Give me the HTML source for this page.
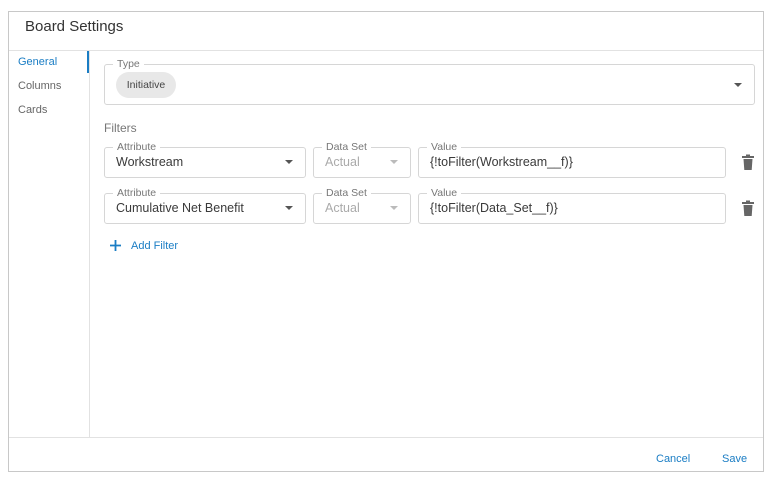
<!DOCTYPE html><html><head><style>
*{box-sizing:border-box;margin:0;padding:0}
body{width:768px;height:479px;background:#fff;font-family:"Liberation Sans",sans-serif;position:relative;overflow:hidden}
.dlg{position:absolute;left:8px;top:11px;width:756px;height:461px;border:1px solid #c8c8c8}
.a{position:absolute}
.box{position:absolute;border:1px solid #d6d6d6;border-radius:3px}
.lbl{position:absolute;top:-7px;left:8px;background:#fff;padding:0 4px;font-size:10.5px;color:#777;line-height:12px}
.val{position:absolute;left:11px;top:7px;font-size:12.5px;color:#3a3a3a}
.dis{color:#aaa}
.car{position:absolute;top:12px;width:0;height:0;border-left:4px solid transparent;border-right:4px solid transparent;border-top:4px solid #555}
.nav{position:absolute;left:18px;font-size:11px;color:#666}
</style></head><body>
<div class="dlg"></div>
<div class="a" style="left:25px;top:18px;font-size:15px;color:#333;line-height:18px">Board Settings</div>
<div class="a" style="left:9px;top:50px;width:754px;height:1px;background:#e2e2e2"></div>
<div class="a" style="left:89px;top:51px;width:1px;height:386px;background:#e2e2e2"></div>
<div class="a" style="left:87px;top:51px;width:2px;height:22px;background:#1a7dc4"></div>
<div class="nav" style="top:56px;color:#1a7dc4">General</div>
<div class="nav" style="top:80px">Columns</div>
<div class="nav" style="top:104px">Cards</div>
<div class="box" style="left:104px;top:64px;width:651px;height:41px"><div class="lbl">Type</div>
<div class="a" style="left:11px;top:7px;width:60px;height:26px;border-radius:13px;background:#e8e8e8;font-size:10.5px;color:#444;line-height:26px;text-align:center">Initiative</div>
<div class="car" style="right:12px;top:18px"></div></div>
<div class="a" style="left:104px;top:121px;font-size:12px;color:#777">Filters</div>

<div class="box" style="left:104px;top:147px;width:202px;height:31px"><div class="lbl">Attribute</div><div class="val">Workstream</div><div class="car" style="right:12px"></div></div>
<div class="box" style="left:313px;top:147px;width:98px;height:31px"><div class="lbl">Data Set</div><div class="val dis">Actual</div><div class="car" style="right:12px;border-top-color:#bbb"></div></div>
<div class="box" style="left:418px;top:147px;width:308px;height:31px"><div class="lbl">Value</div><div class="val">{!toFilter(Workstream__f)}</div></div>

<div class="box" style="left:104px;top:193px;width:202px;height:31px"><div class="lbl">Attribute</div><div class="val">Cumulative Net Benefit</div><div class="car" style="right:12px"></div></div>
<div class="box" style="left:313px;top:193px;width:98px;height:31px"><div class="lbl">Data Set</div><div class="val dis">Actual</div><div class="car" style="right:12px;border-top-color:#bbb"></div></div>
<div class="box" style="left:418px;top:193px;width:308px;height:31px"><div class="lbl">Value</div><div class="val">{!toFilter(Data_Set__f)}</div></div>

<svg class="a" style="left:741px;top:154px" width="14" height="16" viewBox="0 0 14 16"><path d="M1 2h12v2H1zM5 0.5h4v2H5zM2.5 5h9l-0.8 11h-7.4z" fill="#666"/></svg>
<svg class="a" style="left:741px;top:200px" width="14" height="16" viewBox="0 0 14 16"><path d="M1 2h12v2H1zM5 0.5h4v2H5zM2.5 5h9l-0.8 11h-7.4z" fill="#666"/></svg>

<svg class="a" style="left:110px;top:240px" width="11" height="11" viewBox="0 0 11 11"><path d="M5.5 0v11M0 5.5h11" stroke="#1a7dc4" stroke-width="1.8"/></svg>
<div class="a" style="left:131px;top:240px;font-size:11px;color:#1a7dc4">Add Filter</div>

<div class="a" style="left:9px;top:437px;width:754px;height:1px;background:#e2e2e2"></div>
<div class="a" style="left:656px;top:453px;font-size:11px;color:#1a7dc4">Cancel</div>
<div class="a" style="left:722px;top:453px;font-size:11px;color:#1a7dc4">Save</div>
</body></html>
